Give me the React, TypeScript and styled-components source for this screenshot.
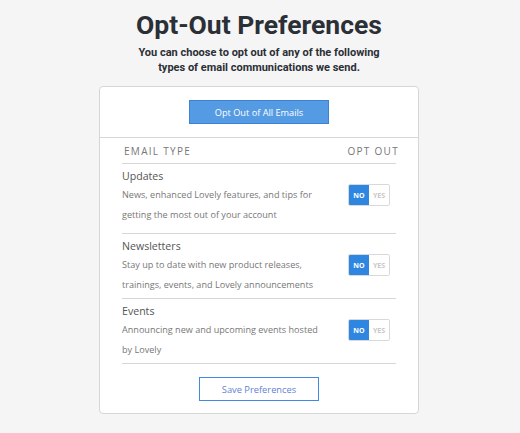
import React from 'react';
import styled, { createGlobalStyle } from 'styled-components';

const GlobalStyle = createGlobalStyle`
  html, body {
    margin: 0;
    padding: 0;
    background: #f5f5f5;
  }
  * { box-sizing: border-box; }
`;

type Pref = { title: string; lines: string[] };

const prefs: Pref[] = [
  { title: 'Updates', lines: ['News, enhanced Lovely features, and tips for', 'getting the most out of your account'] },
  { title: 'Newsletters', lines: ['Stay up to date with new product releases,', 'trainings, events, and Lovely announcements'] },
  { title: 'Events', lines: ['Announcing new and upcoming events hosted', 'by Lovely'] },
];

export default function App() {
  return (
    <Page>
      <GlobalStyle />
      <Title>Opt-Out Preferences</Title>
      <Subtitle>
        You can choose to opt out of any of the following<br />
        types of email communications we send.
      </Subtitle>
      <Card>
        <TopBar>
          <PrimaryButton>Opt Out of All Emails</PrimaryButton>
        </TopBar>
        <Body>
          <HeaderRow>
            <span>EMAIL TYPE</span>
            <span>OPT OUT</span>
          </HeaderRow>
          {prefs.map((p) => (
            <PrefRow key={p.title}>
              <PrefText>
                <PrefTitle>{p.title}</PrefTitle>
                <PrefDesc>
                  {p.lines[0]}<br />{p.lines[1]}
                </PrefDesc>
              </PrefText>
              <Toggle>
                <ToggleHalf $active>NO</ToggleHalf>
                <ToggleHalf>YES</ToggleHalf>
              </Toggle>
            </PrefRow>
          ))}
          <Footer>
            <SaveButton>Save Preferences</SaveButton>
          </Footer>
        </Body>
      </Card>
    </Page>
  );
}

const Page = styled.div`
  width: 520px;
  min-height: 433px;
  display: flex;
  flex-direction: column;
  align-items: center;
  padding: 10px 2px 0 0;
  font-family: "Open Sans", "Liberation Sans", sans-serif;
`;

const Title = styled.h1`
  margin: 0;
  font-family: Roboto, "Liberation Sans", sans-serif;
  font-size: 26.5px;
  line-height: 30px;
  font-weight: 700;
  color: #2b2f36;
`;

const Subtitle = styled.p`
  margin: 5px 0 0;
  font-family: Roboto, "Liberation Sans", sans-serif;
  font-size: 11px;
  line-height: 15px;
  font-weight: 700;
  text-align: center;
  color: #2b2f36;
`;

const Card = styled.div`
  margin-top: 11px;
  width: 320px;
  background: #fff;
  border: 1px solid #d6d6d6;
  border-radius: 4px;
`;

const TopBar = styled.div`
  display: flex;
  justify-content: center;
  padding: 13px 0 13px;
  border-bottom: 1px solid #d6d6d6;
`;

const PrimaryButton = styled.button`
  width: 140px;
  height: 24px;
  background: #559be3;
  border: 1px solid #3c82d6;
  color: #fff;
  font-family: "Open Sans", "Liberation Sans", sans-serif;
  font-size: 9.2px;
  padding: 0;
`;

const Body = styled.div`
  padding: 0 22px 12px;
`;

const HeaderRow = styled.div`
  display: flex;
  justify-content: space-between;
  padding: 6px 0 5px 2px;
  border-bottom: 1px solid #d6d6d6;
  font-size: 10px;
  letter-spacing: 1.3px;
  line-height: 14px;
  color: #777;

  span:last-child {
    margin-right: -3px;
  }
`;

const PrefRow = styled.div`
  display: flex;
  align-items: flex-start;
  justify-content: space-between;
  padding: 4px 0 3px;
  border-bottom: 1px solid #d6d6d6;

  &:nth-of-type(2) {
    padding-bottom: 8px;
  }
`;

const PrefText = styled.div`
  display: flex;
  flex-direction: column;
`;

const PrefTitle = styled.div`
  font-size: 10.6px;
  line-height: 17px;
  color: #555;
`;

const PrefDesc = styled.div`
  font-size: 9.1px;
  line-height: 20px;
  color: #777;
`;

const Toggle = styled.div`
  display: flex;
  margin-top: 16px;
  margin-right: 6px;
  border: 1px solid #d9d9d9;
  border-radius: 2px;
  overflow: hidden;
`;

const ToggleHalf = styled.div<{ $active?: boolean }>`
  width: 20px;
  height: 20px;
  display: flex;
  align-items: center;
  justify-content: center;
  font-size: 7px;
  font-weight: 700;
  background: ${(p) => (p.$active ? '#2f86e0' : '#fff')};
  color: ${(p) => (p.$active ? '#fff' : '#c8c8c8')};
`;

const Footer = styled.div`
  display: flex;
  justify-content: center;
  padding-top: 13px;
`;

const SaveButton = styled.button`
  width: 120px;
  height: 24px;
  background: #fff;
  border: 1px solid #3f8ae0;
  color: #6680d8;
  font-family: "Open Sans", "Liberation Sans", sans-serif;
  font-size: 9.3px;
  padding: 0;
`;
